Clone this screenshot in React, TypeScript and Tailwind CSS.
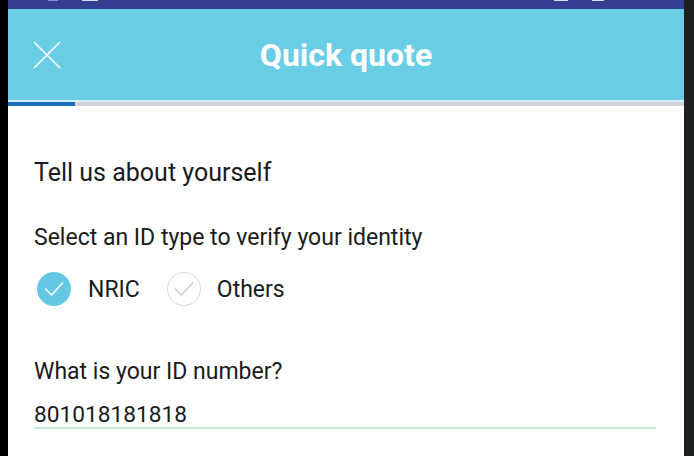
import React from "react";

function Check({ color }: { color: string }) {
  return (
    <svg width="20" height="16" viewBox="0 0 20 16" fill="none">
      <path d="M1.5 8 L7.5 14 L18.5 2" stroke={color} strokeWidth="1.5" strokeLinecap="round" strokeLinejoin="round" />
    </svg>
  );
}

export default function App() {
  return (
    <div className="flex h-[456px] w-[694px] overflow-hidden bg-[#1e1f1f]" style={{ fontFamily: "Roboto, 'Noto Sans', sans-serif" }}>
      <div className="w-[8px] shrink-0 bg-black" />
      <div className="flex w-[676px] shrink-0 flex-col bg-white">
        <div className="relative h-[9px] shrink-0 bg-[#353f92]">
          <div className="absolute left-[40px] top-0 h-[1px] w-[10px] bg-[#8d93c4]" />
          <div className="absolute left-[74px] top-0 h-[1px] w-[16px] bg-[#d9dbec]" />
          <div className="absolute left-[546px] top-0 h-[1px] w-[14px] bg-[#d9dbec]" />
          <div className="absolute left-[584px] top-0 h-[1px] w-[12px] bg-[#d9dbec]" />
        </div>
        <div className="relative flex h-[91px] shrink-0 items-center justify-center bg-[#6acde6]">
          <svg className="absolute left-[25px] top-[32px]" width="28" height="28" viewBox="0 0 28 28" fill="none">
            <path d="M1.5 1.5 L26.5 26.5 M26.5 1.5 L1.5 26.5" stroke="white" strokeWidth="1.6" strokeLinecap="round" />
          </svg>
          <span className="text-[32px] font-bold leading-none text-white">Quick quote</span>
        </div>
        <div className="h-[2px] shrink-0 bg-[#d6eef6]" />
        <div className="flex h-[4px] shrink-0 bg-[#cfd4da]">
          <div className="w-[67px] bg-[#1a6fba]" />
        </div>
        <div className="flex flex-col px-[26px] text-[#1b1b1b]">
          <div className="mt-[52px] text-[25px] leading-[30px]">Tell us about yourself</div>
          <div className="mt-[36px] text-[23px] leading-[28px]">Select an ID type to verify your identity</div>
          <div className="mt-[20px] flex items-center">
            <div className="ml-[3px] flex h-[34px] w-[34px] items-center justify-center rounded-full bg-[#64c8e4]">
              <Check color="white" />
            </div>
            <span className="ml-[17px] text-[23px] leading-none">NRIC</span>
            <div className="ml-[27px] flex h-[34px] w-[34px] items-center justify-center rounded-full border border-[#d3dade] bg-white">
              <Check color="#c4cdd2" />
            </div>
            <span className="ml-[16px] text-[23px] leading-none">Others</span>
          </div>
          <div className="mt-[52px] text-[23px] leading-[28px]">What is your ID number?</div>
          <div className="mt-[16px] w-[622px] border-b-2 border-[#c7ecd5] text-[22.7px] leading-[25px]">801018181818</div>
        </div>
      </div>
    </div>
  );
}
